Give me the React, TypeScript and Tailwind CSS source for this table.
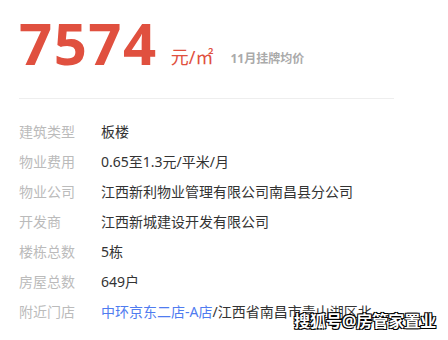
const rows: { label: string; value: React.ReactNode }[] = [
  { label: "建筑类型", value: "板楼" },
  { label: "物业费用", value: "0.65至1.3元/平米/月" },
  { label: "物业公司", value: "江西新利物业管理有限公司南昌县分公司" },
  { label: "开发商", value: "江西新城建设开发有限公司" },
  { label: "楼栋总数", value: "5栋" },
  { label: "房屋总数", value: "649户" },
  {
    label: "附近门店",
    value: (
      <>
        <span className="text-[#4f7cf0]">中环京东二店-A店</span>/江西省南昌市青山湖区北
      </>
    ),
  },
];

export default function App() {
  return (
    <div
      className="relative h-[340px] w-[448px] overflow-hidden bg-white"
      style={{ fontFamily: '"Noto Sans", "Noto Sans CJK SC", sans-serif' }}
    >
      <div className="w-[375px] pl-[19px] box-content">
        {/* Price header */}
        <div className="flex items-end pt-[12px] pb-[24px] border-b border-[#eeeeee]">
          <span className="text-[58px] font-bold leading-[62px] tracking-[1.5px] text-[#e0503f]">7574</span>
          <span className="ml-[13px] mb-[8px] text-[18px] leading-none text-[#e0503f]">
            元/㎡
          </span>
          <span className="ml-[17px] mb-[9px] text-[12px] font-bold leading-none text-[#aaaaaa]">11月挂牌均价</span>
        </div>

        {/* Detail rows */}
        <div className="pt-[18px] flex flex-col">
          {rows.map((r) => (
            <div key={r.label} className="flex text-[14px] leading-[30px]">
              <span className="w-[82px] shrink-0 text-[#bbbbbb]">{r.label}</span>
              <span className="text-[#333333]">{r.value}</span>
            </div>
          ))}
        </div>
      </div>

      {/* Watermark */}
      <div
        className="absolute left-[294px] top-[313px] text-[16px] font-bold leading-none text-white"
        style={{ textShadow: "1px 1px 0 #000, -1px -1px 0 #000, 1px -1px 0 #000, -1px 1px 0 #000" }}
      >
        搜狐号@房管家置业
      </div>
    </div>
  );
}
